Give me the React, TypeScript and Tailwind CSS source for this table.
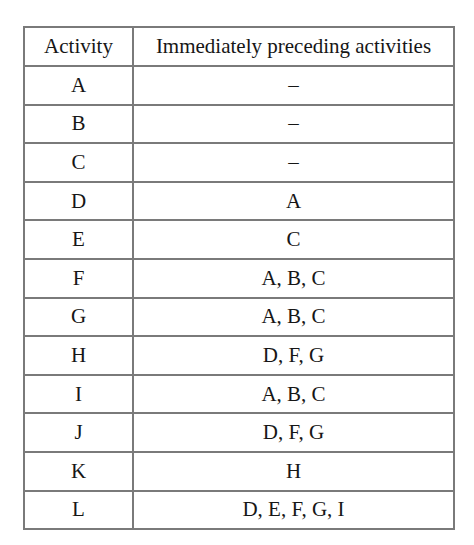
const rows: [string, string][] = [
  ["A", "–"],
  ["B", "–"],
  ["C", "–"],
  ["D", "A"],
  ["E", "C"],
  ["F", "A, B, C"],
  ["G", "A, B, C"],
  ["H", "D, F, G"],
  ["I", "A, B, C"],
  ["J", "D, F, G"],
  ["K", "H"],
  ["L", "D, E, F, G, I"],
]

export default function App() {
  return (
    <main className="w-[474px] h-[545px] bg-white pt-[26px] pl-[23px] font-['Liberation_Serif',serif] text-[21px] leading-none text-[#161616]">
      <table className="border-collapse w-[432px]">
        <thead>
          <tr className="h-[39px]">
            <th className="w-[109px] border-2 border-[#7a7a7a] font-normal text-center">Activity</th>
            <th className="border-2 border-[#7a7a7a] font-normal text-center">Immediately preceding activities</th>
          </tr>
        </thead>
        <tbody>
          {rows.map(([act, pre]) => (
            <tr key={act} className="h-[38.6px]">
              <td className="border-2 border-[#7a7a7a] text-center">{act}</td>
              <td className="border-2 border-[#7a7a7a] text-center">{pre}</td>
            </tr>
          ))}
        </tbody>
      </table>
    </main>
  )
}
